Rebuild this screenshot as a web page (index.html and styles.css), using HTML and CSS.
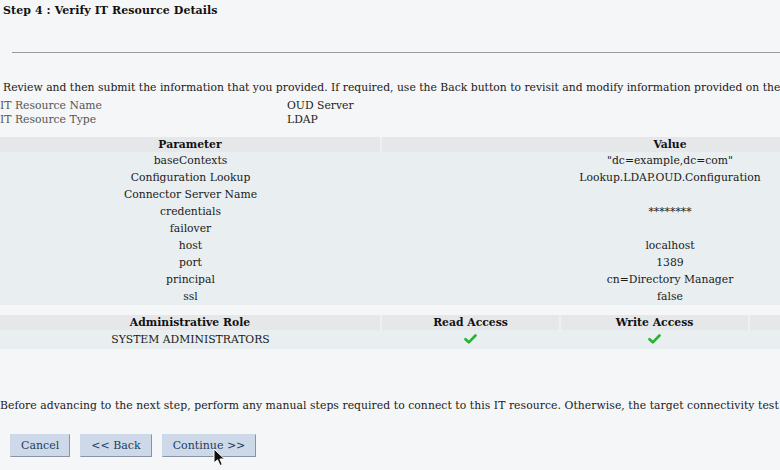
FILE: index.html
```html
<!DOCTYPE html>
<html>
<head>
<meta charset="utf-8">
<link rel="stylesheet" href="styles.css">
</head>
<body>
<div class="page">
  <h1 class="title">Step 4 : Verify IT Resource Details</h1>
  <hr class="rule">
  <p class="intro">Review and then submit the information that you provided. If required, use the Back button to revisit and modify information provided on the</p>
  <div class="summary">
    <span class="label">IT Resource Name</span><span class="val">OUD Server</span>
    <span class="label">IT Resource Type</span><span class="val">LDAP</span>
  </div>
  <table class="params">
    <thead>
      <tr><th class="c1">Parameter</th><th class="c2">Value</th></tr>
    </thead>
    <tbody>
      <tr><td>baseContexts</td><td>"dc=example,dc=com"</td></tr>
      <tr><td>Configuration Lookup</td><td>Lookup.LDAP.OUD.Configuration</td></tr>
      <tr><td>Connector Server Name</td><td></td></tr>
      <tr><td>credentials</td><td>********</td></tr>
      <tr><td>failover</td><td></td></tr>
      <tr><td>host</td><td>localhost</td></tr>
      <tr><td>port</td><td>1389</td></tr>
      <tr><td>principal</td><td>cn=Directory Manager</td></tr>
      <tr><td>ssl</td><td>false</td></tr>
    </tbody>
  </table>
  <table class="roles">
    <thead>
      <tr><th class="r1">Administrative Role</th><th class="r2">Read Access</th><th class="r3">Write Access</th><th class="r4"></th></tr>
    </thead>
    <tbody>
      <tr>
        <td>SYSTEM ADMINISTRATORS</td>
        <td><svg class="tick" width="13" height="10" viewBox="0 0 13 10"><path d="M1.5 5.2 L4.8 8.3 L11.5 1.5" fill="none" stroke="#1fba2a" stroke-width="2.6" stroke-linecap="round" stroke-linejoin="round"/></svg></td>
        <td><svg class="tick" width="13" height="10" viewBox="0 0 13 10"><path d="M1.5 5.2 L4.8 8.3 L11.5 1.5" fill="none" stroke="#1fba2a" stroke-width="2.6" stroke-linecap="round" stroke-linejoin="round"/></svg></td>
        <td></td>
      </tr>
    </tbody>
  </table>
  <p class="note">Before advancing to the next step, perform any manual steps required to connect to this IT resource. Otherwise, the target connectivity test</p>
  <div class="actions">
    <button class="btn">Cancel</button>
    <button class="btn">&lt;&lt; Back</button>
    <button class="btn">Continue &gt;&gt;</button>
    <svg class="cursor" width="14" height="20" viewBox="0 0 14 20"><path d="M1 1 L1 15 L4.5 11.8 L7 17.5 L9.3 16.5 L6.9 11 L11.5 11 Z" fill="#111" stroke="#fff" stroke-width="1"/></svg>
  </div>
</div>
</body>
</html>
```
FILE: styles.css
```css
html, body {
  margin: 0;
  padding: 0;
  overflow: hidden;
  background: #f5f6f8;
}
.page {
  font-family: "DejaVu Serif", serif;
  font-size: 10.8px;
  color: #1a1a1a;
  width: 780px;
  height: 470px;
  overflow: hidden;
}
.title {
  font-size: 11px;
  font-weight: bold;
  margin: 0;
  padding: 4px 0 0 3px;
  line-height: 14px;
  color: #111;
  letter-spacing: 0.08px;
}
.rule {
  margin: 34px 0 0 12px;
  border: 0;
  border-top: 1px solid #9a9a9a;
  height: 0;
}
.intro {
  margin: 28px 0 0 3px;
  white-space: nowrap;
  line-height: 14px;
}
.summary {
  display: grid;
  grid-template-columns: 287px auto;
  line-height: 14px;
  margin-top: 4px;
}
.label { color: #555; }
.val { color: #222; }
.params, .roles {
  border-collapse: collapse;
  border-spacing: 0;
}
.params {
  margin-top: 10px;
  width: 960px;
}
.params th, .roles th {
  background: #e6e7e8;
  font-weight: bold;
  height: 15px;
  padding: 0;
  line-height: 15px;
  border-right: 2px solid #eef0f1;
  color: #111;
}
.params .c1 { width: 380px; }
.params td {
  background: #e9eef0;
  text-align: center;
  height: 17px;
  padding: 0;
  line-height: 17px;
  white-space: nowrap;
}
.roles {
  margin-top: 10px;
  width: 960px;
}
.roles .r1 { width: 380px; }
.roles .r2 { width: 177px; }
.roles .r3 { width: 187px; }
.roles td {
  background: #e9eef0;
  text-align: center;
  height: 19px;
  padding: 0;
  line-height: 17px;
}
.tick { vertical-align: -1px; }
.note {
  margin: 50px 0 0 0;
  white-space: nowrap;
  line-height: 14px;
  letter-spacing: 0.06px;
}
.actions {
  position: relative;
  display: flex;
  gap: 10px;
  margin: 21px 0 0 10px;
}
.btn {
  font-family: "DejaVu Serif", serif;
  font-size: 11px;
  color: #1d3d5e;
  background: #cdd8e8;
  border: 1px solid #cdd8e8;
  border-right-color: #8794a6;
  border-bottom-color: #8794a6;
  border-radius: 0;
  height: 23px;
  padding: 0 10px;
}
.cursor {
  position: absolute;
  left: 203px;
  top: 14px;
}
```
